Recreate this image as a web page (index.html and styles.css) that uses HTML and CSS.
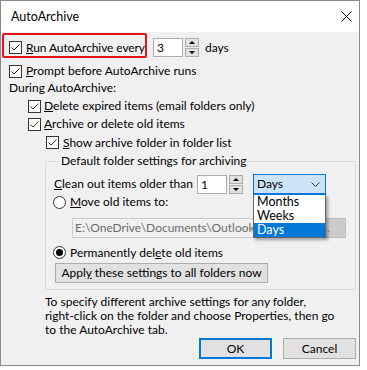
FILE: index.html
```html
<!DOCTYPE html>
<html lang="en">
<head>
<meta charset="utf-8">
<title>AutoArchive</title>
<link rel="stylesheet" href="styles.css">
</head>
<body>
<div class="window">
  <div class="titlebar">
    <span class="title">AutoArchive</span>
    <svg class="close" width="11" height="11" viewBox="0 0 11 11"><path d="M0.5 0.5L10.5 10.5M10.5 0.5L0.5 10.5" stroke="#000" stroke-width="1" fill="none"/></svg>
  </div>
  <div class="content">
    <div class="row r1">
      <span class="highlight"></span>
      <span class="cb"><svg width="13" height="13" viewBox="0 0 13 13"><rect x="0.5" y="0.5" width="12" height="12" fill="#fff" stroke="#333"/><path d="M2.5 6.5L5 9L10.5 3.5" stroke="#333" fill="none"/></svg></span>
      <span class="label w-run"><u>R</u>un AutoArchive every</span>
      <span class="spin">
        <span class="spin-input">3</span>
        <span class="spin-btns"><span class="sb up"><i></i></span><span class="sb down"><i></i></span></span>
      </span>
      <span class="label days">days</span>
    </div>
    <div class="row r2">
      <span class="cb"><svg width="13" height="13" viewBox="0 0 13 13"><rect x="0.5" y="0.5" width="12" height="12" fill="#fff" stroke="#333"/><path d="M2.5 6.5L5 9L10.5 3.5" stroke="#333" fill="none"/></svg></span>
      <span class="label"><u>P</u>rompt before AutoArchive runs</span>
    </div>
    <div class="row r3">During AutoArchive:</div>
    <div class="row r4 ind1">
      <span class="cb"><svg width="13" height="13" viewBox="0 0 13 13"><rect x="0.5" y="0.5" width="12" height="12" fill="#fff" stroke="#333"/><path d="M2.5 6.5L5 9L10.5 3.5" stroke="#333" fill="none"/></svg></span>
      <span class="label"><u>D</u>elete expired items (email folders only)</span>
    </div>
    <div class="row r5 ind1">
      <span class="cb"><svg width="13" height="13" viewBox="0 0 13 13"><rect x="0.5" y="0.5" width="12" height="12" fill="#fff" stroke="#333"/><path d="M2.5 6.5L5 9L10.5 3.5" stroke="#333" fill="none"/></svg></span>
      <span class="label"><u>A</u>rchive or delete old items</span>
    </div>
    <div class="row r6 ind2">
      <span class="cb"><svg width="13" height="13" viewBox="0 0 13 13"><rect x="0.5" y="0.5" width="12" height="12" fill="#fff" stroke="#333"/><path d="M2.5 6.5L5 9L10.5 3.5" stroke="#333" fill="none"/></svg></span>
      <span class="label"><u>S</u>how archive folder in folder list</span>
    </div>
    <fieldset class="group">
      <legend>Default folder settings for archiving</legend>
      <div class="row g-clean">
        <span class="label w-clean"><u>C</u>lean out items older than</span>
        <span class="spin">
          <span class="spin-input">1</span>
          <span class="spin-btns"><span class="sb up"><i></i></span><span class="sb down"><i></i></span></span>
        </span>
        <span class="dropdown">
          <span class="dd-value">Days</span>
          <svg class="chev" width="9" height="5" viewBox="0 0 9 5"><path d="M0.5 0.5L4.5 4.5L8.5 0.5" stroke="#333" fill="none"/></svg>
          <span class="dd-list">
            <span class="dd-item">Months</span>
            <span class="dd-item">Weeks</span>
            <span class="dd-item sel">Days</span>
          </span>
        </span>
      </div>
      <div class="row g-move">
        <span class="rb"><svg width="13" height="13" viewBox="0 0 13 13"><circle cx="6.5" cy="6.5" r="6" fill="#fff" stroke="#333"/></svg></span>
        <span class="label"><u>M</u>ove old items to:</span>
      </div>
      <div class="row g-path">
        <span class="textbox">E:\OneDrive\Documents\Outlook Files\archive.pst</span>
        <span class="btn disabled browse"><span>Browse...</span></span>
      </div>
      <div class="row g-perm">
        <span class="rb"><svg width="13" height="13" viewBox="0 0 13 13"><circle cx="6.5" cy="6.5" r="6" fill="#fff" stroke="#333"/><circle cx="6.5" cy="6.5" r="3.5" fill="#000"/></svg></span>
        <span class="label">Permanently del<u>e</u>te old items</span>
      </div>
      <div class="row g-apply">
        <span class="btn apply"><span>Appl<u>y</u> these settings to all folders now</span></span>
      </div>
    </fieldset>
    <p class="note">To specify different archive settings for any folder,<br>right-click on the folder and choose Properties, then go<br>to the AutoArchive tab.</p>
    <div class="row actions">
      <span class="btn default"><span>OK</span></span>
      <span class="btn"><span>Cancel</span></span>
    </div>
  </div>
</div>
</body>
</html>
```

FILE: styles.css
```css
* { box-sizing: border-box; }
html, body { margin: 0; padding: 0; background: #ffffff; }
body {
  font-family: Lato, "Noto Sans", sans-serif;
  font-size: 12px;
  color: #000;
}
u { text-decoration: underline; text-underline-offset: 1px; }

.window {
  width: 360px;
  height: 366px;
  border: 1px solid #8a8a8a;
  background: #f0f0f0;
  display: flex;
  flex-direction: column;
}
.titlebar {
  height: 31px;
  background: #fff;
  display: flex;
  align-items: center;
  justify-content: space-between;
  padding: 0 7px 0 10px;
}
.title { font-size: 12.5px; line-height: 16px; }
.close { display: block; }

.content {
  flex: 1;
  padding: 0 3px 0 8px;
  display: flex;
  flex-direction: column;
}
.row {
  display: flex;
  align-items: center;
  line-height: 16px;
  white-space: nowrap;
}
.cb, .rb { width: 13px; height: 13px; flex: none; display: block; }
.cb svg, .rb svg { display: block; }
.row .cb + .label, .row .rb + .label { margin-left: 4px; }
.ind1 .cb + .label { margin-left: 3px; }

.r1 { position: relative; margin-top: 5px; height: 21px; }
.highlight {
  position: absolute;
  left: -7px;
  top: -4px;
  width: 145px;
  height: 25px;
  border: 2px solid #e8141b;
  border-radius: 2px;
}
.w-run { width: 127px; flex: none; letter-spacing: -0.1px; }
.spin { display: flex; align-items: center; flex: none; }
.spin-input {
  width: 30px;
  height: 19px;
  border: 1px solid #a9acb3;
  background: #fff;
  padding-left: 3px;
  line-height: 17px;
}
.spin-btns { display: flex; flex-direction: column; margin-left: 2px; }
.sb {
  width: 14px;
  height: 9px;
  background: #e1e1e1;
  border: 1px solid #adadad;
  display: flex;
  align-items: center;
  justify-content: center;
}
.sb.down { margin-top: 1px; }
.sb i {
  display: block;
  width: 0; height: 0;
  border-left: 3px solid transparent;
  border-right: 3px solid transparent;
}
.sb.up i { border-bottom: 3px solid #000; }
.sb.down i { border-top: 3px solid #000; }
.days { margin-left: 6px; }

.r2 { margin-top: 4px; height: 18px; }
.r3 { height: 16px; }
.r4 { margin-top: 1px; height: 18px; }
.r5 { height: 18px; }
.r6 { height: 19px; }
.ind1 { padding-left: 19px; }
.ind2 { padding-left: 37px; }

.group {
  margin: 1px 0 0 36px;
  width: 311px;
  border: 1px solid #dcdcdc;
  padding: 5px 7px 6px 7px;
  min-width: 0;
}
.group legend {
  padding: 0 1px;
  margin-left: 7px;
  line-height: 16px;
}
.g-clean { height: 20px; padding-left: 1px; }
.w-clean { width: 143px; flex: none; }
.dropdown {
  position: relative;
  margin-left: 10px;
  width: 73px;
  height: 20px;
  border: 1px solid #0078d7;
  background: #cce4f7;
  display: flex;
  align-items: center;
  padding-left: 3px;
}
.dd-value { flex: 1; line-height: 18px; }
.chev { display: block; margin-right: 5px; }
.dd-list {
  position: absolute;
  left: -1px;
  top: 19px;
  width: 73px;
  background: #fff;
  border: 1px solid #646464;
  border-top-color: #0078d7;
  box-shadow: 2px 2px 3px rgba(0, 0, 0, 0.35);
  display: flex;
  flex-direction: column;
  z-index: 2;
}
.dd-item { display: block; line-height: 14px; padding-left: 3px; font-size: 12.5px; }
.dd-item.sel { background: #0078d7; color: #fff; }

.g-move { margin-top: 1px; height: 14px; }
.g-path { margin-top: 9px; height: 20px; }
.textbox {
  margin-left: 19px;
  width: 197px;
  height: 20px;
  border: 1px solid #cccccc;
  background: #f0f0f0;
  color: #6d6d6d;
  line-height: 18px;
  padding-left: 2px;
  overflow: hidden;
  white-space: nowrap;
  flex: none;
}
.btn {
  display: flex;
  align-items: center;
  justify-content: center;
  height: 21px;
  width: 73px;
  background: #e1e1e1;
  border: 1px solid #adadad;
  line-height: 16px;
  flex: none;
  white-space: nowrap;
}
.browse {
  margin-left: 3px;
  width: 74px;
  height: 20px;
  padding-right: 6px;
}
.btn.disabled { background: #cccccc; border-color: #bfbfbf; color: #838383; }
.g-perm { margin-top: 7px; height: 15px; }
.g-apply { margin-top: 3px; height: 20px; }
.apply { margin-left: 2px; width: 213px; height: 20px; }

.note {
  margin: 5px 0 0 36px;
  line-height: 14px;
  white-space: nowrap;
}
.actions {
  margin-top: 1px;
  justify-content: flex-end;
  gap: 11px;
}
.btn.default { border: 2px solid #0078d7; }
```
